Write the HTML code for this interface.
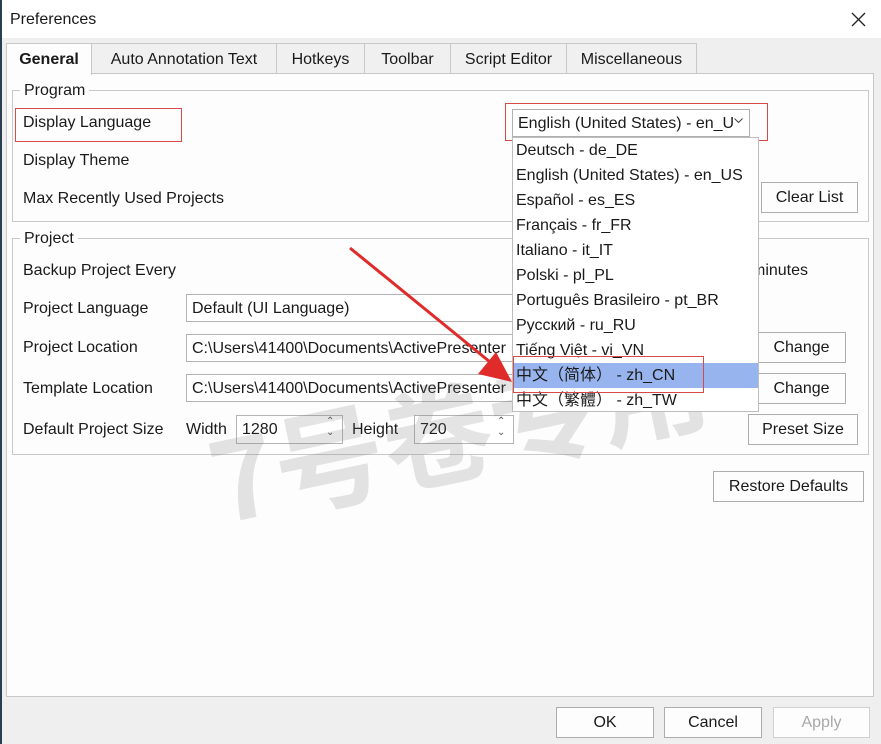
<!DOCTYPE html>
<html><head><meta charset="utf-8"><style>
*{margin:0;padding:0;box-sizing:border-box}
body{width:881px;height:744px;overflow:hidden;background:#efefef;font-family:"Liberation Sans","Noto Sans CJK SC",sans-serif;font-size:16px;color:#1a1a1a;position:relative}
.a{position:absolute;white-space:nowrap}
.box{position:absolute;border:1px solid #c8c8c8}
.btn{position:absolute;border:1px solid #adadad;background:#fdfdfd;text-align:center;line-height:30px}
.fld{position:absolute;border:1px solid #b4b4b4;background:#fff;padding-left:5px;line-height:27px;overflow:hidden;white-space:nowrap}
.red{position:absolute;border:1px solid #d84a4a}
.tab{position:absolute;top:43px;height:31px;border:1px solid #c8c8c8;background:#f0f0f0;text-align:center;line-height:32px}
.it{position:absolute;left:3px;height:25px;line-height:25px;white-space:nowrap}
</style></head><body>
<div class="a" style="left:0;top:0;width:881px;height:38px;background:#fff"></div>
<div class="a" style="left:0;top:0;width:2px;height:744px;background:#2b3e50"></div>
<div class="a" style="left:10px;top:11px;font-size:16px">Preferences</div>
<svg class="a" style="left:851px;top:12px" width="15" height="15"><path d="M1 1L14 14M14 1L1 14" stroke="#222" stroke-width="1.3"/></svg>

<div class="a" style="left:6px;top:73px;width:868px;height:624px;background:#fdfdfd;border:1px solid #c8c8c8"></div>
<div class="tab" style="left:91px;width:186px">Auto Annotation Text</div>
<div class="tab" style="left:276px;width:89px">Hotkeys</div>
<div class="tab" style="left:364px;width:87px">Toolbar</div>
<div class="tab" style="left:450px;width:117px">Script Editor</div>
<div class="tab" style="left:566px;width:131px">Miscellaneous</div>
<div class="tab" style="left:6px;width:86px;background:#fdfdfd;border-bottom:none;height:32px;font-weight:bold">General</div>

<div class="box" style="left:12px;top:90px;width:857px;height:132px"></div>
<div class="a" style="left:20px;top:81px;background:#fdfdfd;padding:0 4px;line-height:20px">Program</div>
<div class="a" style="left:23px;top:114px">Display Language</div>
<div class="red" style="left:15px;top:108px;width:167px;height:34px"></div>
<div class="a" style="left:23px;top:152px">Display Theme</div>
<div class="a" style="left:23px;top:190px">Max Recently Used Projects</div>
<div class="btn" style="left:761px;top:182px;width:97px;height:31px">Clear List</div>

<div class="box" style="left:12px;top:238px;width:857px;height:217px"></div>
<div class="a" style="left:20px;top:229px;background:#fdfdfd;padding:0 4px;line-height:20px">Project</div>
<div class="a" style="left:23px;top:262px">Backup Project Every</div>
<div class="a" style="left:752px;top:262px">minutes</div>
<div class="a" style="left:23px;top:300px">Project Language</div>
<div class="fld" style="left:186px;top:294px;width:340px;height:28px">Default (UI Language)</div>
<div class="a" style="left:23px;top:339px">Project Location</div>
<div class="fld" style="left:186px;top:334px;width:340px;height:28px">C:\Users\41400\Documents\ActivePresenter</div>
<div class="btn" style="left:757px;top:332px;width:89px;height:31px">Change</div>
<div class="a" style="left:23px;top:380px">Template Location</div>
<div class="fld" style="left:186px;top:374px;width:340px;height:28px">C:\Users\41400\Documents\ActivePresenter</div>
<div class="btn" style="left:757px;top:373px;width:89px;height:31px">Change</div>
<div class="a" style="left:23px;top:421px">Default Project Size</div>
<div class="a" style="left:186px;top:421px">Width</div>
<div class="fld" style="left:236px;top:415px;width:107px;height:29px">1280</div>
<div class="a" style="left:326px;top:416px;font-size:10px;line-height:11px;color:#555">&#8963;<br>&#8964;</div>
<div class="a" style="left:352px;top:421px">Height</div>
<div class="fld" style="left:414px;top:415px;width:100px;height:29px">720</div>
<div class="a" style="left:497px;top:416px;font-size:10px;line-height:11px;color:#555">&#8963;<br>&#8964;</div>
<div class="btn" style="left:748px;top:414px;width:110px;height:31px">Preset Size</div>

<div class="btn" style="left:713px;top:471px;width:151px;height:31px">Restore Defaults</div>

<div class="btn" style="left:556px;top:707px;width:98px;height:31px">OK</div>
<div class="btn" style="left:664px;top:707px;width:98px;height:31px">Cancel</div>
<div class="btn" style="left:773px;top:707px;width:97px;height:31px;color:#a8a8a8;border-color:#d0d0d0">Apply</div>

<div class="a" style="left:205px;top:345px;font-size:110px;font-weight:bold;color:rgba(120,120,120,0.2);transform:rotate(-12deg);font-family:'Noto Sans CJK SC',sans-serif">7号卷专用</div>

<div class="fld" style="left:512px;top:109px;width:238px;height:28px;border-color:#b0b0b0">English (United States) - en_U</div>
<svg class="a" style="left:734px;top:118px" width="9" height="6"><path d="M0.5 0.5L4.5 4.5L8.5 0.5" fill="none" stroke="#444"/></svg>
<div class="red" style="left:505px;top:103px;width:263px;height:38px"></div>

<div class="a" style="left:512px;top:137px;width:247px;height:275px;background:#fff;border:1px solid #bdbdbd">
<div class="a" style="left:0;top:225px;width:245px;height:25px;background:#98b4ef"></div>
<div class="it" style="top:0">Deutsch - de_DE</div>
<div class="it" style="top:25px">English (United States) - en_US</div>
<div class="it" style="top:50px">Español - es_ES</div>
<div class="it" style="top:75px">Français - fr_FR</div>
<div class="it" style="top:100px">Italiano - it_IT</div>
<div class="it" style="top:125px">Polski - pl_PL</div>
<div class="it" style="top:150px">Português Brasileiro - pt_BR</div>
<div class="it" style="top:175px">Русский - ru_RU</div>
<div class="it" style="top:200px">Tiếng Việt - vi_VN</div>
<div class="it" style="top:225px">中文（简体） - zh_CN</div>
<div class="it" style="top:250px">中文（繁體） - zh_TW</div>
</div>
<div class="red" style="left:513px;top:356px;width:191px;height:37px"></div>

<svg class="a" style="left:0;top:0" width="881" height="744"><path d="M350 248L490 362" stroke="#e02b2b" stroke-width="3"/><path d="M512 382L478 374L496 352Z" fill="#e02b2b"/></svg>
</body></html>
